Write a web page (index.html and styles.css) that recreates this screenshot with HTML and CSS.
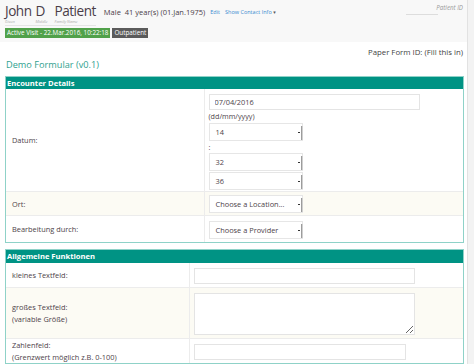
FILE: index.html
```html
<!DOCTYPE html>
<html lang="de">
<head>
    <meta charset="UTF-8">
    <title>Demo Formular (v0.1)</title>
    <link rel="stylesheet" href="styles.css">
</head>
<body>
    <div class="page">
        <div class="content">
            <div class="patient-header">
                <div class="patient-main">
                    <div class="name-line">
                        <span class="name-part name-given"><span class="name">John</span><span class="name-label">Given</span></span>
                        <span class="name-part name-middle"><span class="name">D</span><span class="name-label">Middle</span></span>
                        <span class="name-part name-family"><span class="name">Patient</span><span class="name-label">Family Name</span></span>
                        <span class="demographics">Male&nbsp; 41 year(s) (01.Jan.1975)</span>
                        <a class="header-link" href="#">Edit</a>
                        <a class="header-link" href="#">Show Contact Info <span class="caret">&#9662;</span></a>
                    </div>
                    <div class="badges">
                        <span class="badge badge-visit">Active Visit - 22.Mar.2016, 10:22:18</span>
                        <span class="badge badge-type">Outpatient</span>
                    </div>
                </div>
                <div class="patient-id">
                    <em>Patient ID</em>
                    <span class="id-line"></span>
                </div>
            </div>

            <div class="form-area">
                <p class="paper-form">Paper Form ID: (Fill this in)</p>
                <h2 class="form-title">Demo Formular (v0.1)</h2>

                <div class="section">
                    <div class="section-title">Encounter Details</div>
                    <table class="fields fields-encounter">
                        <tr>
                            <td class="label">Datum:</td>
                            <td class="value date-cell">
                                <input class="text-input date-input" type="text" value="07/04/2016">
                                <div class="hint">(dd/mm/yyyy)</div>
                                <div class="select"><span>14</span></div>
                                <div class="hint colon">:</div>
                                <div class="select"><span>32</span></div>
                                <div class="select select-tight"><span>36</span></div>
                            </td>
                        </tr>
                        <tr class="alt">
                            <td class="label">Ort:</td>
                            <td class="value"><div class="select"><span>Choose a Location...</span></div></td>
                        </tr>
                        <tr>
                            <td class="label">Bearbeitung durch:</td>
                            <td class="value value-loose"><div class="select"><span>Choose a Provider</span></div></td>
                        </tr>
                    </table>
                </div>

                <div class="section">
                    <div class="section-title section-title-tall">Allgemeine Funktionen</div>
                    <table class="fields fields-general">
                        <tr>
                            <td class="label">kleines Textfeld:</td>
                            <td class="value"><input class="text-input wide-input" type="text"></td>
                        </tr>
                        <tr class="alt">
                            <td class="label">großes Textfeld:<br>(variable Größe)</td>
                            <td class="value"><textarea class="text-area"></textarea></td>
                        </tr>
                        <tr>
                            <td class="label">Zahlenfeld:<br>(Grenzwert möglich z.B. 0-100)</td>
                            <td class="value"><input class="text-input number-input" type="text"></td>
                        </tr>
                    </table>
                </div>
            </div>
        </div>
        <div class="scroll-strip"></div>
    </div>
</body>
</html>
```

FILE: styles.css
```css
* {
    margin: 0;
    padding: 0;
    box-sizing: border-box;
}

body {
    font-family: 'Open Sans', 'DejaVu Sans', sans-serif;
    color: #4d3f4a;
    background: #fff;
    overflow: hidden;
}

.page {
    display: flex;
    height: 364px;
}

.content {
    flex: 1;
    min-width: 0;
}

.scroll-strip {
    width: 7px;
    background: #f3f3f3;
    border-left: 1px solid #e2e2e2;
}

/* patient header */

.patient-header {
    background: #f8f8f8;
    height: 42px;
    padding: 2px 4px 0 5px;
    display: flex;
    justify-content: space-between;
}

.name-line {
    display: flex;
    align-items: flex-start;
}

.name-part {
    display: flex;
    flex-direction: column;
    border-bottom: 1px solid #e4e4e4;
    padding-bottom: 1px;
}

.name {
    font-size: 13.6px;
    line-height: 17px;
    color: #4a3d48;
    letter-spacing: -0.5px;
}

.name-label {
    font-size: 4px;
    line-height: 5px;
    color: #aaa;
    font-style: italic;
}

.name-given {
    padding-right: 4px;
}

.name-middle {
    padding-right: 7px;
}

.demographics {
    font-size: 7.5px;
    line-height: 10px;
    margin: 5px 0 0 8px;
    color: #4a3d48;
}

.header-link {
    font-size: 5.5px;
    line-height: 10px;
    margin: 5px 0 0 5px;
    color: #3a8bd0;
    text-decoration: none;
}

.caret {
    font-size: 5px;
    color: #555;
}

.badges {
    display: flex;
    gap: 2px;
    margin-top: 2px;
}

.badge {
    font-size: 6.3px;
    line-height: 10px;
    color: #fff;
    padding: 0 2px;
}

.badge-visit {
    background: #51a14a;
}

.badge-type {
    background: #5b5b5b;
}

.patient-id {
    display: flex;
    flex-direction: column;
    align-items: flex-end;
    font-size: 6.2px;
    color: #9a9a9a;
    padding-top: 1px;
}

.id-line {
    width: 32px;
    border-bottom: 1px solid #ddd;
    margin: 2px 25px 0 0;
}

/* form */

.form-area {
    padding: 0 3px 0 5px;
}

.paper-form {
    text-align: right;
    font-size: 7.8px;
    line-height: 11px;
    margin-top: 5px;
    padding-right: 1px;
    color: #3f3f3f;
}

.form-title {
    font-weight: normal;
    font-size: 9.2px;
    line-height: 12px;
    color: #2f9f8f;
    margin: 1px 0 5px 1px;
}

.section {
    border: 1px solid #8fd2c8;
    margin-bottom: 6px;
}

.section-title {
    background: #009384;
    color: #fff;
    font-weight: bold;
    font-size: 7.6px;
    line-height: 12px;
    padding-left: 1px;
}

.section-title-tall {
    line-height: 13px;
}

.fields {
    width: 100%;
    border-collapse: collapse;
    font-size: 7.4px;
}

.fields td {
    border-top: 1px solid #ececec;
    vertical-align: middle;
}

.fields tr:first-child td {
    border-top: none;
}

.fields .label {
    padding-left: 6px;
    line-height: 12px;
    border-right: 1px solid #ececec;
}

.fields-encounter .label {
    width: 198px;
}

.fields-general .label {
    width: 183px;
}

.fields .value {
    padding: 3px 4px;
}

.fields-encounter .value {
    padding: 2px 4px 1px;
}

.fields-encounter .date-cell {
    padding: 3px 4px 0;
}

.fields-encounter .value-loose {
    padding: 4px 4px 2px;
}

.alt td {
    background: #fcfbf4;
}

.text-input,
.text-area {
    display: block;
    border: 1px solid #e4e4e4;
    background: #fff;
    font-family: inherit;
    font-size: 7.4px;
    color: #4d3f4a;
    padding: 0 5px;
    outline: none;
}

.text-input {
    height: 16px;
}

.date-input {
    width: 211px;
    margin-top: 2px;
}

.wide-input {
    width: 221px;
    margin-top: 2px;
}

.number-input {
    width: 212px;
    margin-top: 2px;
}

.text-area {
    width: 221px;
    height: 42px;
    resize: both;
    margin-top: 2px;
}

.hint {
    line-height: 11px;
    font-size: 7.2px;
    margin-top: 1px;
}

.colon {
    line-height: 10px;
    margin: 1px 0;
}

.select {
    position: relative;
    width: 94px;
    height: 18px;
    border: 1px solid #e6e6e6;
    background: #fff;
    padding-left: 6px;
    line-height: 16px;
    margin: 1px 0;
}

.select::after {
    content: '';
    position: absolute;
    right: 0;
    top: 2px;
    bottom: 0;
    border-right: 1px solid #9c9c9c;
    box-shadow: 1px 0 0 #d0d0d0;
}

.select::before {
    content: '';
    position: absolute;
    right: 2px;
    top: 8px;
    width: 2px;
    height: 1px;
    background: #333;
}

.select-tight {
    margin-top: 0;
}
```
